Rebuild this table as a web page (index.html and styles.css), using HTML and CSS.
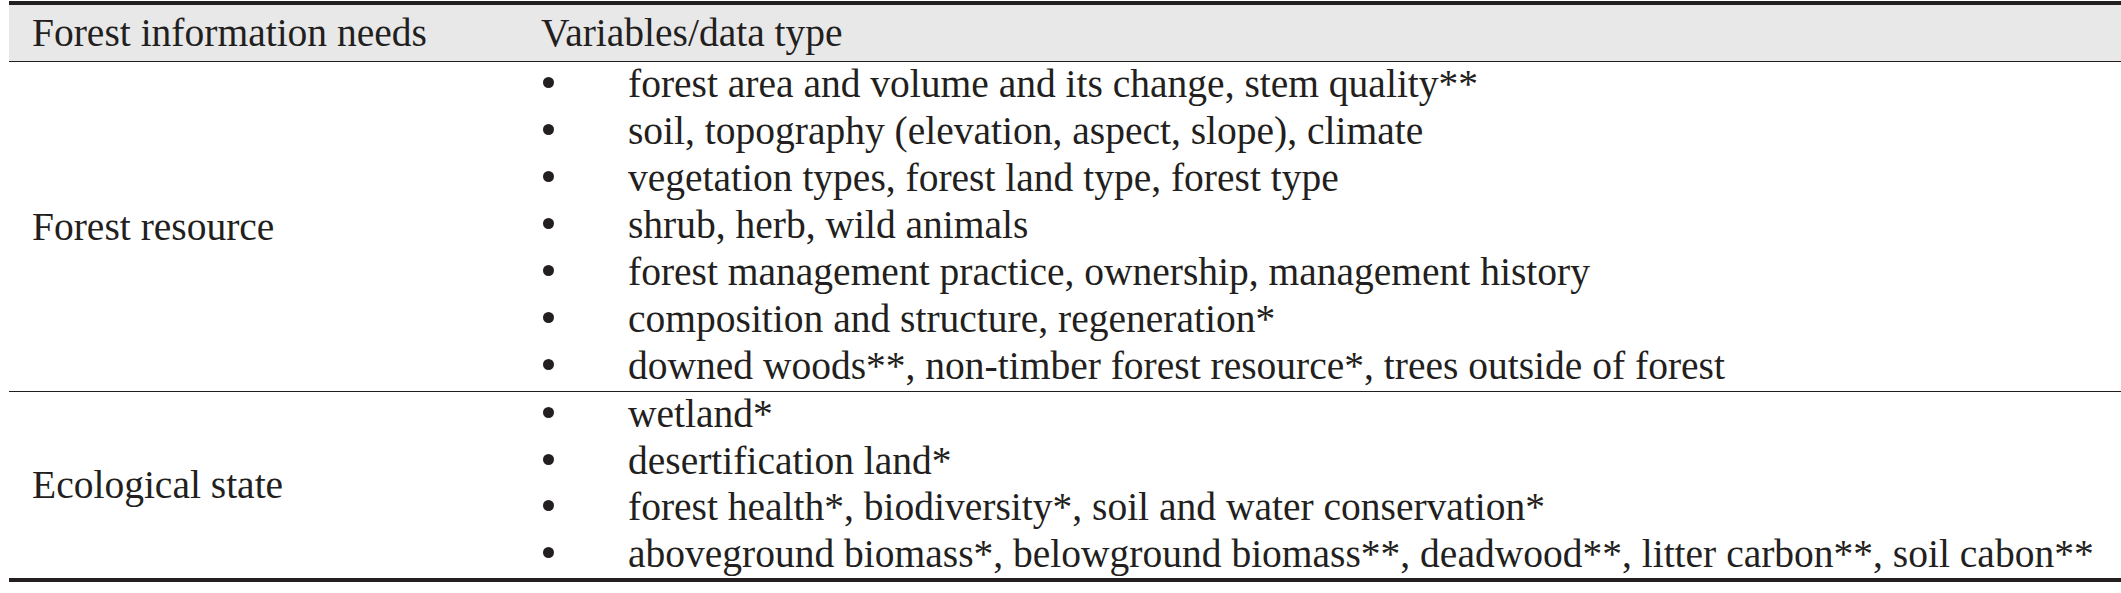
FILE: index.html
```html
<!DOCTYPE html>
<html>
<head>
<meta charset="utf-8">
<link rel="stylesheet" href="styles.css">
</head>
<body>
<table class="tbl">
  <thead>
    <tr class="head">
      <th class="c1">Forest information needs</th>
      <th class="c2">Variables/data type</th>
    </tr>
  </thead>
  <tbody>
    <tr class="group g1">
      <td class="c1">Forest resource</td>
      <td class="c2">
        <ul class="list">
          <li>forest area and volume and its change, stem quality**</li>
          <li>soil, topography (elevation, aspect, slope), climate</li>
          <li>vegetation types, forest land type, forest type</li>
          <li>shrub, herb, wild animals</li>
          <li>forest management practice, ownership, management history</li>
          <li>composition and structure, regeneration*</li>
          <li>downed woods**, non-timber forest resource*, trees outside of forest</li>
        </ul>
      </td>
    </tr>
    <tr class="group g2">
      <td class="c1">Ecological state</td>
      <td class="c2">
        <ul class="list">
          <li>wetland*</li>
          <li>desertification land*</li>
          <li>forest health*, biodiversity*, soil and water conservation*</li>
          <li>aboveground biomass*, belowground biomass**, deadwood**, litter carbon**, soil cabon**</li>
        </ul>
      </td>
    </tr>
  </tbody>
</table>
</body>
</html>
```
FILE: styles.css
```css
html, body {
  margin: 0;
  padding: 0;
  background: #ffffff;
}
body {
  padding: 1px 0 0 9px;
  color: #231f20;
}
.tbl {
  width: 2112px;
  border-collapse: collapse;
  border-top: 4px solid #231f20;
  border-bottom: 4px solid #231f20;
  font-family: "Liberation Serif", serif;
  font-size: 39.5px;
}
.tbl th, .tbl td {
  padding: 0;
  text-align: left;
  font-weight: normal;
  vertical-align: middle;
  font-family: "Liberation Serif", serif;
}
.head {
  background: #e8e8e8;
  border-bottom: 1.5px solid #231f20;
}
.head th {
  height: 56px;
  line-height: 56px;
}
.c1 {
  width: 500px;
  padding-left: 23px !important;
}
.c2 {
  padding-left: 9px !important;
}
.g1 {
  border-bottom: 1.5px solid #231f20;
}
.list {
  list-style: none;
  margin: 0;
  padding: 0;
}
.list li {
  display: flex;
  height: 47px;
  line-height: 45px;
  white-space: nowrap;
}
.g2 .list li {
  height: 46.5px;
}
.list li::before {
  content: "";
  flex: none;
  width: 11px;
  height: 11px;
  border-radius: 50%;
  background: #231f20;
  margin: 15px 74px 0 2px;
}
```
